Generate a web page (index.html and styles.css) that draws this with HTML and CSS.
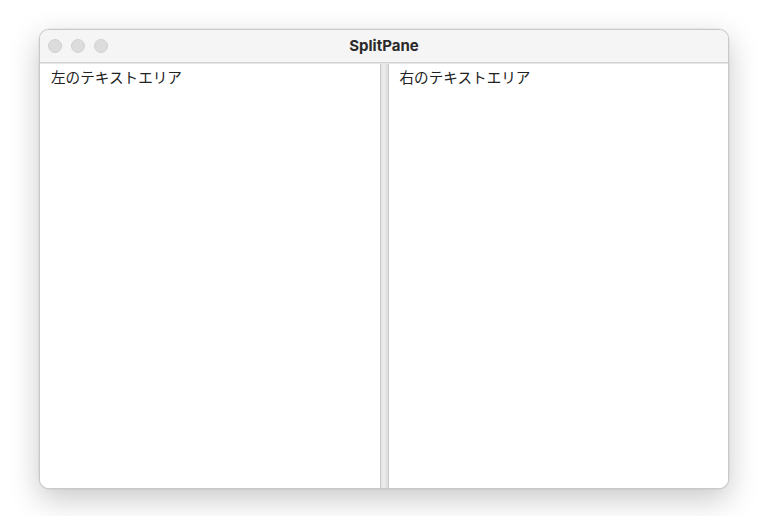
FILE: index.html
```html
<!DOCTYPE html>
<html lang="ja">
<head>
    <meta charset="UTF-8">
    <meta name="viewport" content="width=device-width, initial-scale=1.0">
    <title>SplitPane</title>
    <link rel="stylesheet" href="styles.css">
</head>
<body>
    <div class="window">
        <div class="titlebar">
            <div class="lights">
                <span class="light"></span>
                <span class="light"></span>
                <span class="light"></span>
            </div>
            <div class="title">SplitPane</div>
        </div>
        <div class="split">
            <div class="pane pane-left">左のテキストエリア</div>
            <div class="divider"></div>
            <div class="pane pane-right">右のテキストエリア</div>
        </div>
    </div>
</body>
</html>
```

FILE: styles.css
```css
body {
    margin: 0;
    padding: 29px 0 0 39px;
    background: #ffffff;
    font-family: "Noto Sans CJK JP", "Noto Sans", sans-serif;
    width: 768px;
    height: 516px;
    box-sizing: border-box;
    overflow: hidden;
}

.window {
    width: 690px;
    height: 460px;
    box-sizing: border-box;
    border: 1px solid #c9c9c9;
    border-radius: 10px;
    overflow: hidden;
    display: flex;
    flex-direction: column;
    background: #ffffff;
    box-shadow: 0 10px 30px rgba(0, 0, 0, 0.22), 0 0 0 0.5px rgba(0, 0, 0, 0.08);
}

.titlebar {
    position: relative;
    height: 32px;
    flex: none;
    background: #f5f5f5;
    border-bottom: 1px solid #d2d2d2;
    box-shadow: 0 1px 0 #e6e6e6;
    display: flex;
    align-items: center;
    justify-content: center;
}

/* close / minimise / zoom, greyed out while inactive */
.lights {
    position: absolute;
    left: 8px;
    top: 9px;
    display: flex;
    gap: 9px;
}

.light {
    width: 14px;
    height: 14px;
    box-sizing: border-box;
    border-radius: 50%;
    background: #dcdcdc;
    border: 0.5px solid #d0d0d0;
}

.title {
    font-family: Inter, "Liberation Sans", sans-serif;
    font-weight: 700;
    font-size: 15px;
    color: #2a2a2a;
    margin-top: -1px;
}

.split {
    flex: 1;
    display: flex;
    margin-top: 1px;
}

.pane {
    flex: 1;
    background: #ffffff;
    font-size: 14.6px;
    color: #222222;
    padding: 2px 11px;
    line-height: 22px;
}

.pane-left {
    border-right: 1px solid #cacaca;
}

.pane-right {
    border-left: 1px solid #cacaca;
}

.divider {
    width: 7px;
    flex: none;
    background: linear-gradient(90deg, #e2e2e2 0%, #eeeeee 45%, #dadada 100%);
}
```
